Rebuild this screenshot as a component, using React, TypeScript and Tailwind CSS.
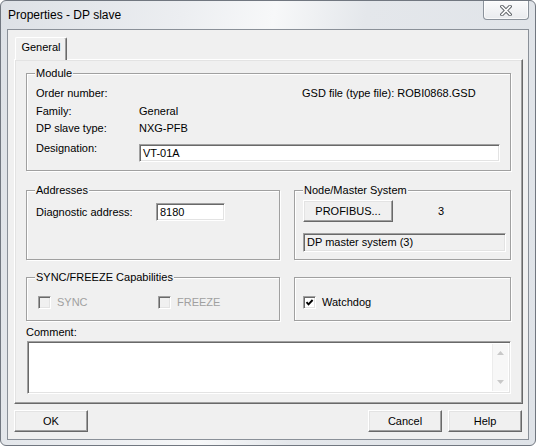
import type { ReactNode } from "react";

// Classic Win32 3D edges
const raised =
  "border border-t-white border-l-white border-r-[#696969] border-b-[#696969] shadow-[inset_-1px_-1px_0_#a0a0a0,inset_1px_1px_0_#e3e3e3]";
const sunken =
  "border border-t-[#a0a0a0] border-l-[#a0a0a0] border-r-white border-b-white shadow-[inset_1px_1px_0_#696969,inset_-1px_-1px_0_#e3e3e3]";

function GroupBox({ title, className, children }: { title?: string; className?: string; children?: ReactNode }) {
  return (
    <div
      className={`relative border border-[#a0a0a0] shadow-[inset_1px_1px_0_#fff,1px_1px_0_#fff] ${className ?? ""}`}
    >
      {title && (
        <span className="absolute left-[8px] top-[-7px] bg-[#f0f0f0] px-[1px] leading-[13px]">{title}</span>
      )}
      {children}
    </div>
  );
}

function PushButton({ label, className }: { label: string; className?: string }) {
  return (
    <button className={`flex h-[22px] items-center justify-center bg-[#f0f0f0] leading-[13px] ${raised} ${className ?? ""}`}>
      {label}
    </button>
  );
}

function CheckBox({ label, checked, disabled }: { label: string; checked?: boolean; disabled?: boolean }) {
  return (
    <div className="flex items-center">
      <div
        className={`flex h-[13px] w-[13px] items-center justify-center ${sunken} ${disabled ? "bg-[#f0f0f0]" : "bg-white"}`}
      >
        {checked && (
          <svg width="9" height="9" viewBox="0 0 9 9">
            <path d="M1.5 4.2 L3.5 6.3 L7.6 2" fill="none" stroke="#000" strokeWidth="1.9" />
          </svg>
        )}
      </div>
      <span className={`ml-[6px] leading-[13px] ${disabled ? "text-[#a0a0a0]" : ""}`}>{label}</span>
    </div>
  );
}

export default function App() {
  return (
    <div className="h-[447px] w-[538px] bg-white font-['Liberation_Sans',Arial,sans-serif] text-[11px] text-black">
      {/* window frame */}
      <div className="flex h-[446px] w-[536px] flex-col rounded-[6px] border border-[#717780] bg-[linear-gradient(100deg,#dde1e6_0%,#eceef1_30%,#f7f8f9_45%,#e4e7eb_60%,#dfe3e8_100%)]">
        {/* title bar */}
        <div className="flex h-[28px] shrink-0 items-start">
          <span className="ml-[7px] mt-[7px] text-[12px] leading-[15px]">Properties - DP slave</span>
          <div className="ml-auto mr-[6px] flex h-[19px] w-[46px] items-center justify-center rounded-b-[4px] border border-t-0 border-[#8b929b] bg-[linear-gradient(#fbfbfc,#e9ebee)] shadow-[inset_0_0_0_1px_#ffffffb0]">
            <svg width="12" height="11" viewBox="0 0 12 11">
              <path d="M2 1.5 L10 9.5 M10 1.5 L2 9.5" stroke="#5f6368" strokeWidth="3.6" strokeLinecap="square" />
              <path d="M2 1.5 L10 9.5 M10 1.5 L2 9.5" stroke="#ffffff" strokeWidth="1.6" strokeLinecap="square" />
            </svg>
          </div>
        </div>

        {/* client area */}
        <div className="mx-[6px] flex h-[411px] flex-col border border-[#8a9098] bg-[#f0f0f0]">
          {/* tab strip */}
          <div className="relative z-10 mb-[-1px] ml-[7px] mt-[7px] flex h-[23px] w-[52px] items-start justify-center rounded-t-[2px] border-l border-t border-l-white border-t-white border-r border-r-[#696969] bg-[#f0f0f0] shadow-[inset_-1px_0_0_#a0a0a0]">
            <span className="mt-[3px] leading-[13px]">General</span>
          </div>

          {/* tab page */}
          <div className={`ml-[6px] flex h-[345px] w-[509px] flex-col px-[11px] ${raised}`}>
            <GroupBox title="Module" className="mt-[13px] h-[98px] w-[485px] shrink-0">
              <div className="flex flex-col pl-[9px] pr-[10px] pt-[13px]">
                <div className="flex h-[13px] leading-[13px]">
                  <span className="w-[266px]">Order number:</span>
                  <span>GSD file (type file): ROBI0868.GSD</span>
                </div>
                <div className="mt-[5px] flex h-[13px] leading-[13px]">
                  <span className="w-[103px]">Family:</span>
                  <span>General</span>
                </div>
                <div className="mt-[4px] flex h-[13px] leading-[13px]">
                  <span className="w-[103px]">DP slave type:</span>
                  <span>NXG-PFB</span>
                </div>
                <div className="mt-[7px] flex items-start">
                  <span className="w-[103px] leading-[13px]">Designation:</span>
                  <div className={`mt-[2px] flex h-[18px] w-[361px] items-center bg-white pl-[3px] ${sunken}`}>VT-01A</div>
                </div>
              </div>
            </GroupBox>

            <div className="mt-[19px] flex h-[70px] shrink-0 gap-[14px]">
              <GroupBox title="Addresses" className="w-[254px]">
                <div className="flex items-start pl-[9px] pt-[12px]">
                  <span className="mt-[3px] w-[120px] leading-[13px]">Diagnostic address:</span>
                  <div className={`flex h-[18px] w-[69px] items-center bg-white pl-[3px] ${sunken}`}>8180</div>
                </div>
              </GroupBox>
              <GroupBox title="Node/Master System" className="w-[217px]">
                <div className="flex flex-col pl-[8px] pt-[9px]">
                  <div className="flex items-center">
                    <PushButton label="PROFIBUS..." className="w-[90px]" />
                    <span className="ml-[45px] leading-[13px]">3</span>
                  </div>
                  <div className={`mt-[11px] flex h-[19px] w-[203px] items-center bg-[#f0f0f0] pl-[3px] ${sunken}`}>
                    DP master system (3)
                  </div>
                </div>
              </GroupBox>
            </div>

            <div className="mt-[17px] flex h-[44px] shrink-0 gap-[14px]">
              <GroupBox title="SYNC/FREEZE Capabilities" className="w-[254px]">
                <div className="flex pl-[11px] pt-[18px]">
                  <div className="w-[120px]">
                    <CheckBox label="SYNC" disabled />
                  </div>
                  <CheckBox label="FREEZE" disabled />
                </div>
              </GroupBox>
              <GroupBox className="w-[217px]">
                <div className="flex pl-[8px] pt-[18px]">
                  <CheckBox label="Watchdog" checked />
                </div>
              </GroupBox>
            </div>

            <span className="mt-[5px] leading-[13px]">Comment:</span>
            <div className={`ml-[1px] mt-[2px] flex h-[53px] w-[484px] bg-white ${sunken}`}>
              <div className="flex-1" />
              <div className="my-[2px] mr-[2px] flex w-[16px] flex-col items-center justify-between border-l border-[#ececec] bg-[#f7f7f7] py-[7px]">
                <svg width="7" height="4" viewBox="0 0 7 4">
                  <path d="M0 4 L3.5 0 L7 4 Z" fill="#c8c8c8" />
                </svg>
                <svg width="7" height="4" viewBox="0 0 7 4">
                  <path d="M0 0 L3.5 4 L7 0 Z" fill="#c8c8c8" />
                </svg>
              </div>
            </div>
          </div>

          {/* dialog buttons */}
          <div className="ml-[6px] mr-[6px] mt-[6px] flex">
            <PushButton label="OK" className="w-[74px]" />
            <PushButton label="Cancel" className="ml-auto w-[74px]" />
            <PushButton label="Help" className="ml-[6px] w-[74px]" />
          </div>
        </div>
      </div>
    </div>
  );
}
